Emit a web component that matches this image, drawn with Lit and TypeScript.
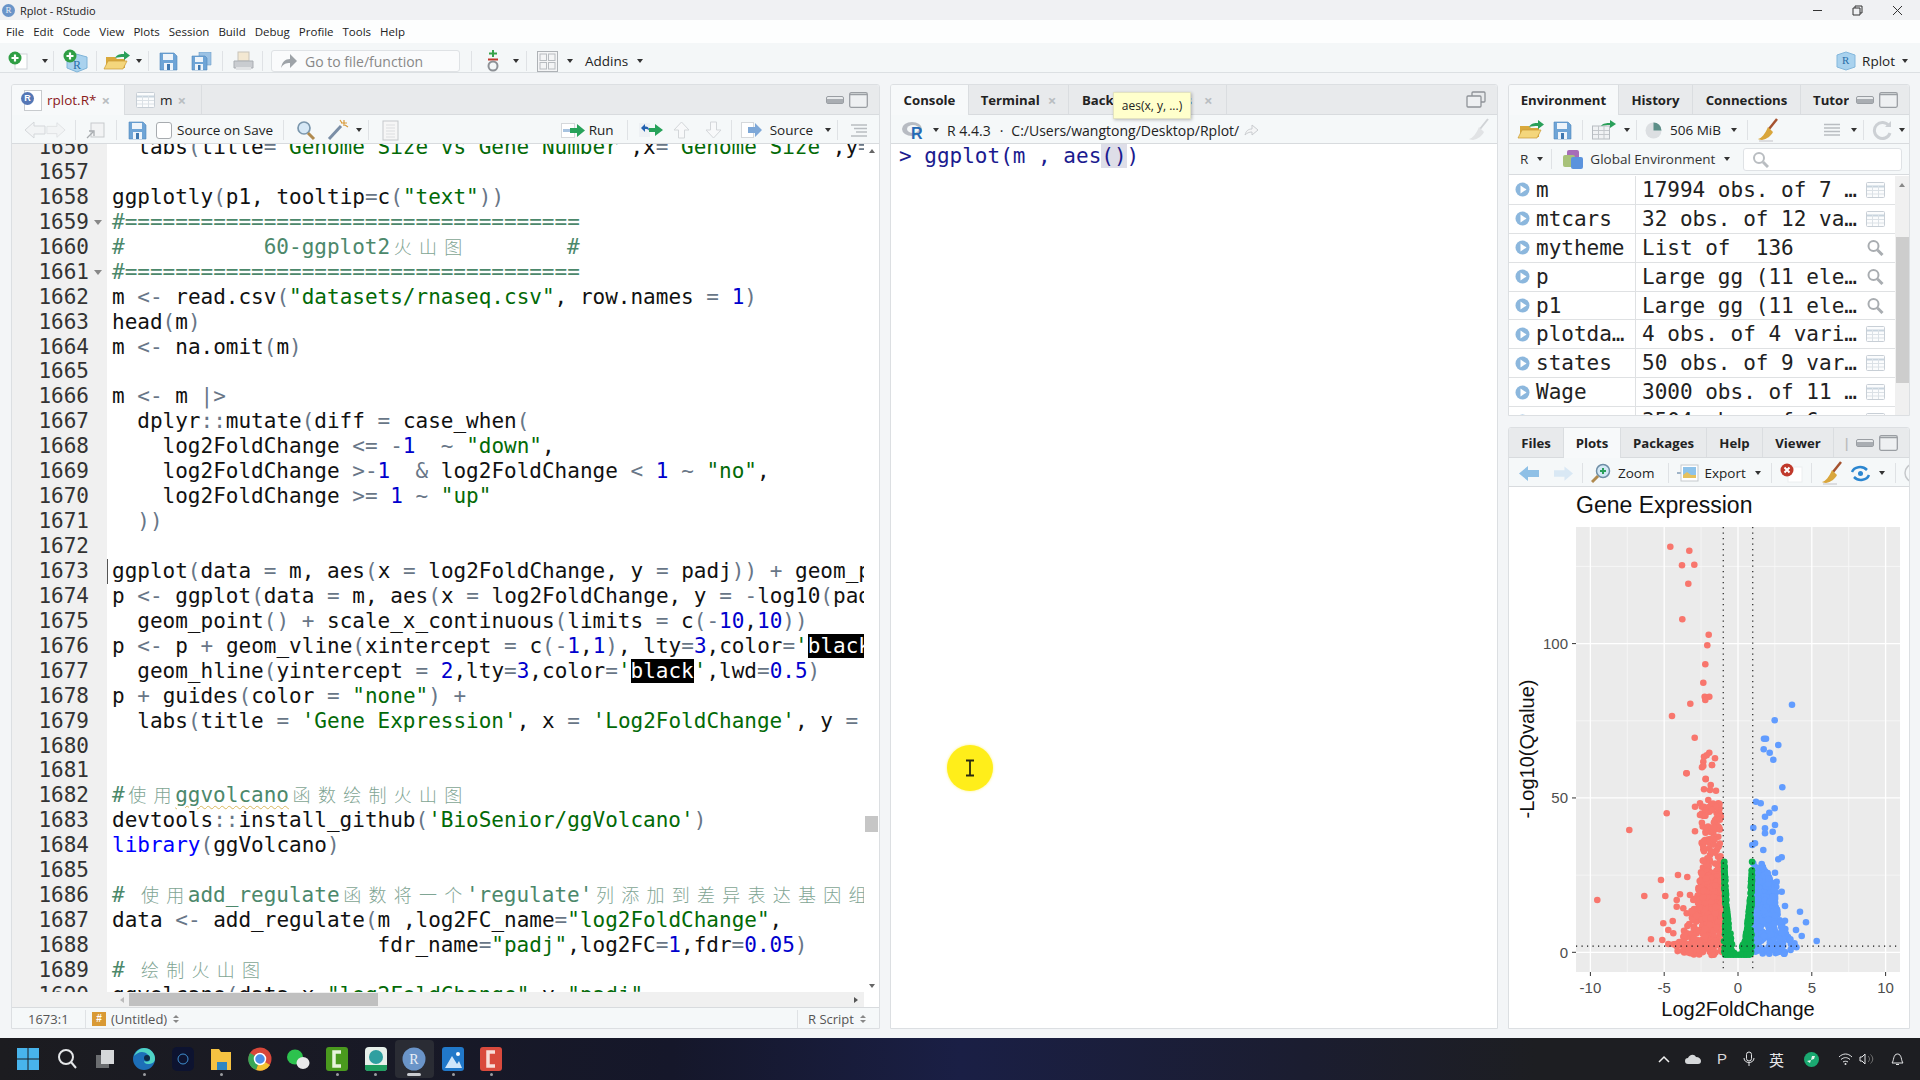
import { LitElement, html, svg, css } from 'lit';
import { customElement } from 'lit/decorators.js';

// ---- code text ----
const CODE: string[] = [
  `  labs(title="Genome Size vs Gene Number",x="Genome Size",y="Gene Number")`,
  ``,
  `ggplotly(p1, tooltip=c("text"))`,
  `#====================================`,
  `#           60-ggplot2火山图        #`,
  `#====================================`,
  `m <- read.csv("datasets/rnaseq.csv", row.names = 1)`,
  `head(m)`,
  `m <- na.omit(m)`,
  ``,
  `m <- m |>`,
  `  dplyr::mutate(diff = case_when(`,
  `    log2FoldChange <= -1  ~ "down",`,
  `    log2FoldChange >-1  & log2FoldChange < 1 ~ "no",`,
  `    log2FoldChange >= 1 ~ "up"`,
  `  ))`,
  ``,
  `ggplot(data = m, aes(x = log2FoldChange, y = padj)) + geom_point()`,
  `p <- ggplot(data = m, aes(x = log2FoldChange, y = -log10(padj), color = diff)) +`,
  `  geom_point() + scale_x_continuous(limits = c(-10,10))`,
  `p <- p + geom_vline(xintercept = c(-1,1), lty=3,color='black',lwd=0.5) +`,
  `  geom_hline(yintercept = 2,lty=3,color='black',lwd=0.5)`,
  `p + guides(color = "none") +`,
  `  labs(title = 'Gene Expression', x = 'Log2FoldChange', y = '-Log10(Qvalue)')`,
  ``,
  ``,
  `#使用ggvolcano函数绘制火山图`,
  `devtools::install_github('BioSenior/ggVolcano')`,
  `library(ggVolcano)`,
  ``,
  `# 使用add_regulate函数将一个'regulate'列添加到差异表达基因组`,
  `data <- add_regulate(m ,log2FC_name="log2FoldChange",`,
  `                     fdr_name="padj",log2FC=1,fdr=0.05)`,
  `# 绘制火山图`,
  `ggvolcano(data,x="log2FoldChange",y="padj",`,
];
const FIRST_LINE = 1656;
const FOLDS = [1659, 1661];

const commentParts = (text: string) =>
  text.split(/([\u4e00-\u9fff]|ggvolcano(?=函))/).filter(Boolean).map(part => {
    if (/[\u4e00-\u9fff]/.test(part)) return html`<span class="cjk">${part}</span>`;
    if (part === 'ggvolcano') return html`<span class="squiggle">${part}</span>`;
    return part;
  });

const TOKENS = /(#.*$)|("[^"]*"|'[^']*')|([A-Za-z_.][\w.]*)|(\d+(?:\.\d+)?)|(<-|\|>|::|<=|>=|[=<>+\-~&()])|(\s+|.)/g;

function highlight(line: string) {
  const out: unknown[] = [];
  for (const m of line.matchAll(TOKENS)) {
    if (m[1]) out.push(html`<span class="c">${commentParts(m[1])}</span>`);
    else if (m[2] === `'black'`) out.push(html`<span class="s">'</span><span class="black">black</span><span class="s">'</span>`);
    else if (m[2]) out.push(html`<span class="s">${m[2]}</span>`);
    else if (m[3]) out.push(m[3] === 'library' ? html`<span class="k">${m[3]}</span>` : m[3]);
    else if (m[4]) out.push(html`<span class="n">${m[4]}</span>`);
    else if (m[5]) out.push(html`<span class="o">${m[5]}</span>`);
    else out.push(m[6]);
  }
  return out;
}

// ---- environment rows ----
const ENV = [
  { name: 'm', value: '17994 obs. of 7 …', kind: 'grid' },
  { name: 'mtcars', value: '32 obs. of 12 va…', kind: 'grid' },
  { name: 'mytheme', value: 'List of  136', kind: 'find' },
  { name: 'p', value: 'Large gg (11 ele…', kind: 'find' },
  { name: 'p1', value: 'Large gg (11 ele…', kind: 'find' },
  { name: 'plotda…', value: '4 obs. of 4 vari…', kind: 'grid' },
  { name: 'states', value: '50 obs. of 9 var…', kind: 'grid' },
  { name: 'Wage', value: '3000 obs. of 11 …', kind: 'grid' },
  { name: 'x', value: '3504 obs. of 6 …', kind: 'grid' },
];

// ---- icons ----
const caret = html`<span class="caret"></span>`;
const sep = html`<span class="sep"></span>`;
const sp = (w: number) => html`<span style="width:${w}px;flex:none"></span>`;

const icNew = html`<svg width="22" height="20" viewBox="0 0 22 20"><rect x="7" y="3" width="12" height="15" fill="#fff" stroke="#cfd4d8"/><circle cx="7" cy="7" r="6.5" fill="#2f9e44"/><path d="M7 3.5v7M3.5 7h7" stroke="#fff" stroke-width="2.2"/></svg>`;
const icProject = html`<svg width="28" height="24" viewBox="0 0 28 24"><path d="M14 5l11 3v11l-10 4-10-4V9z" fill="#a9d2ee" stroke="#7fb4d8"/><text x="11" y="20" font-size="12" font-family="Liberation Serif" fill="#2a6ea8">R</text><circle cx="8" cy="7" r="6.5" fill="#2f9e44"/><path d="M8 3.5v7M4.5 7h7" stroke="#fff" stroke-width="2.2"/></svg>`;
const icFolder = html`<svg width="28" height="20" viewBox="0 0 28 20"><path d="M3 6h9l2 2h8v9H3z" fill="#d9a93c"/><path d="M1 18l4-8h19l-4 8z" fill="#f4d67c" stroke="#c99a35" stroke-width=".7"/><path d="M12 7c2-4 6-4 9-4V0l6 4.500-6 4.500V6c-3 0-6 0-9 1z" fill="#2aa05a"/></svg>`;
const icSave = html`<svg width="19" height="19" viewBox="0 0 19 19"><path d="M1 1h14l3 3v14H1z" fill="#6ea4d6" stroke="#4f88bd" stroke-width=".6"/><rect x="4" y="2" width="10" height="6" fill="#eef4fa"/><rect x="5" y="11" width="9" height="7" fill="#eef4fa"/><rect x="8" y="12" width="3" height="6" fill="#3f78b0"/></svg>`;
const icSaveAll = html`<svg width="21" height="19" viewBox="0 0 21 19"><path d="M8 0h12v13H8z" fill="#9cc2e4" stroke="#6b9dcb" stroke-width=".6"/><path d="M1 4h13l2 2v12H1z" fill="#6ea4d6" stroke="#4f88bd" stroke-width=".6"/><rect x="4" y="5" width="8" height="5" fill="#eef4fa"/><rect x="4" y="12" width="8" height="6" fill="#eef4fa"/><rect x="7" y="13" width="2.500" height="5" fill="#3f78b0"/></svg>`;
const icPrint = html`<svg width="21" height="20" viewBox="0 0 21 20"><rect x="5" y="1" width="11" height="9" fill="#f3e8d2" stroke="#c8c4ba"/><path d="M1 10h19v7H1z" fill="#c9ccd0" stroke="#a9adb2"/><rect x="3" y="16" width="15" height="3" fill="#e1e3e5"/></svg>`;
const icGo = html`<svg width="18" height="16" viewBox="0 0 18 16"><path d="M1 15c1-6 4-9 9-9V1l7 7-7 7v-5c-4 0-7 1-9 5z" fill="#9ea3a8"/></svg>`;
const icVcs = html`<svg width="14" height="22" viewBox="0 0 14 22"><path d="M7 0v7M3 3.500h8" stroke="#38a34a" stroke-width="2"/><path d="M2 9.500h10" stroke="#c0392b" stroke-width="2"/><circle cx="7" cy="16" r="4.500" fill="none" stroke="#8d9196" stroke-width="2"/></svg>`;
const icPanes = html`<svg width="21" height="21" viewBox="0 0 21 21"><rect x=".5" y=".5" width="20" height="20" fill="#f4f5f6" stroke="#aeb2b6"/><rect x="3" y="3" width="6.500" height="6.500" fill="none" stroke="#b8bcc0"/><rect x="11.500" y="3" width="6.500" height="6.500" fill="none" stroke="#b8bcc0"/><rect x="3" y="11.500" width="6.500" height="6.500" fill="none" stroke="#b8bcc0"/><rect x="11.500" y="11.500" width="6.500" height="6.500" fill="none" stroke="#b8bcc0"/></svg>`;
const icCube = html`<svg width="21" height="20" viewBox="0 0 21 20"><path d="M2 4l9-3 9 3v12l-9 3-9-3z" fill="#a9d2ee" stroke="#83b7dc"/><text x="7" y="13" font-size="11" font-family="Liberation Serif" fill="#2a6ea8">R</text></svg>`;
const icBack = html`<svg width="22" height="18" viewBox="0 0 22 18"><path d="M1 9l9-8v4h11v8H10v4z" fill="#f2f4f5" stroke="#d4d7da"/></svg>`;
const icFwd = html`<svg width="20" height="18" viewBox="0 0 22 18"><path d="M21 9l-9-8v4H1v8h11v4z" fill="#f2f4f5" stroke="#dfe1e3"/></svg>`;
const icShow = html`<svg width="20" height="17" viewBox="0 0 20 17"><rect x="6" y="1" width="13" height="14" fill="#f2f3f4" stroke="#c7cacd"/><path d="M2 16l6-6M4 9h5v5" fill="none" stroke="#a8acb0" stroke-width="1.300"/></svg>`;
const icFind = html`<svg width="20" height="21" viewBox="0 0 20 21"><circle cx="8" cy="8" r="6" fill="#d6e8f6" stroke="#7b97ad" stroke-width="1.700"/><path d="M12 13l6 6" stroke="#b08a4e" stroke-width="3"/></svg>`;
const icWand = html`<svg width="23" height="22" viewBox="0 0 23 22"><path d="M2 20L14 7" stroke="#7a8ea6" stroke-width="3"/><path d="M17 1v6M14 4h6M21 8l-3-2M13 1l2 3" stroke="#d99b3c" stroke-width="1.200"/></svg>`;
const icNotes = html`<svg width="18" height="21" viewBox="0 0 18 21"><rect x="2" y="1" width="15" height="19" fill="#f6f6f6" stroke="#c5c8cb"/><path d="M5 5h9M5 8h9M5 11h9M5 14h9M5 17h9" stroke="#dcdee0"/></svg>`;
const icRun = html`<svg width="25" height="15" viewBox="0 0 25 15"><rect x=".5" y=".5" width="13" height="14" fill="#fff" stroke="#d5d8db"/><path d="M2 6h9v3H2z" fill="#a7c3e0"/><path d="M9 5h7V1l8 6.500-8 6.500v-4H9z" fill="#27a25a"/></svg>`;
const icRerun = html`<svg width="24" height="14" viewBox="0 0 24 14"><rect width="11" height="14" fill="#eef1f4"/><path d="M2 5l4-4v2.500c3 0 4 1 4 4-1-1.500-2-1.500-4-1.500V9z" fill="#2361b0"/><path d="M10 5h6V1l8 6-8 6V9h-6z" fill="#27a25a"/></svg>`;
const icUp = html`<svg width="17" height="18" viewBox="0 0 17 18"><path d="M8.500 1L1 9h4.500v8h6V9H16z" fill="#f8f9fa" stroke="#d3d6d9"/></svg>`;
const icDown = html`<svg width="17" height="18" viewBox="0 0 17 18"><path d="M8.500 17L1 9h4.500V1h6v8H16z" fill="#f8f9fa" stroke="#d3d6d9"/></svg>`;
const icSource = html`<svg width="22" height="16" viewBox="0 0 22 16"><rect x=".5" y=".5" width="12" height="15" fill="#fff" stroke="#d5d8db"/><path d="M7 5h7V1l7 7-7 7v-4H7z" fill="#7ea8d8"/></svg>`;
const icOutline = html`<svg width="16" height="13" viewBox="0 0 16 13"><path d="M0 1h16M3 4.500h13M5 8h11M0 12h16" stroke="#b9bdc1" stroke-width="1.300"/></svg>`;
const icMin = html`<svg width="18" height="8" viewBox="0 0 18 8"><rect x=".5" y=".5" width="17" height="7" rx="1.500" fill="#e8eaec" stroke="#9a9ea3"/><rect x="1" y="3" width="16" height="4" fill="#a9adb2"/></svg>`;
const icMax = html`<svg width="19" height="16" viewBox="0 0 19 16"><rect x=".7" y=".7" width="17.600" height="14.600" rx="1.500" fill="#eef0f2" stroke="#9a9ea3" stroke-width="1.300"/><path d="M1 2.500h17" stroke="#9a9ea3" stroke-width="1.600"/></svg>`;
const icRestore = html`<svg width="20" height="17" viewBox="0 0 20 17"><rect x="6" y="1" width="13" height="10" rx="1" fill="none" stroke="#8f9398" stroke-width="1.300"/><rect x="1" y="5" width="14" height="11" rx="1" fill="#eef0f2" stroke="#8f9398" stroke-width="1.300"/></svg>`;
const icRLogo = html`<svg width="24" height="18" viewBox="0 0 24 18"><ellipse cx="10" cy="8" rx="10" ry="7" fill="#b7bbc2"/><ellipse cx="11" cy="8" rx="6" ry="4" fill="#f4f7f8"/><text x="9" y="18" font-size="16" font-weight="700" font-family="Liberation Sans" fill="#2569b5">R</text></svg>`;
const icShare = html`<svg width="15" height="12" viewBox="0 0 15 12"><path d="M1 11c1-4 3-6 7-6V1l6 5-6 5V8c-3 0-5 1-7 3z" fill="#f4f5f6" stroke="#c8cbce"/></svg>`;
const icBroom = html`<svg width="22" height="24" viewBox="0 0 22 24"><path d="M20 1L12 11" stroke="#a5522f" stroke-width="2.500"/><path d="M11 9l5 5c-2 4-6 7-11 8-2 0-4-1-4-1 4-1 7-5 10-12z" fill="#d9a63c"/><path d="M2 23h14" stroke="#d3d5d7" stroke-width="1.500"/></svg>`;
const icBroomOff = html`<svg width="26" height="24" viewBox="0 0 22 24"><path d="M20 1L12 11" stroke="#d0d3d6" stroke-width="2"/><path d="M11 9l5 5c-2 4-6 7-11 8-2 0-4-1-4-1 4-1 7-5 10-12z" fill="#e1e3e5"/></svg>`;
const icImport = html`<svg width="25" height="20" viewBox="0 0 25 20"><rect x=".5" y="6" width="17" height="13" fill="#f0f2f4" stroke="#b7bcc1"/><path d="M1 10.500h16M1 14.500h16M6.500 6v13M12 6v13" stroke="#c4c8cc"/><path d="M9 6c2-3 6-3 9-3V0l6 4-6 4V5c-3 0-6 0-9 1z" fill="#2aa05a"/></svg>`;
const icPie = html`<svg width="17" height="17" viewBox="0 0 17 17"><circle cx="8.500" cy="8.500" r="8" fill="#dcdfe2"/><path d="M8.500 8.500V.5a8 8 0 0 1 8 8z" fill="#5c8f88"/></svg>`;
const icList = html`<svg width="16" height="14" viewBox="0 0 16 14"><path d="M0 1.500h16M0 5h16M0 8.500h16M0 12h16" stroke="#b9bdc1" stroke-width="1.300"/></svg>`;
const icRefresh = html`<svg width="21" height="21" viewBox="0 0 21 21"><path d="M17 6a8 8 0 1 0 1 7" fill="none" stroke="#ccd0d4" stroke-width="3"/><path d="M13 7h6V1z" fill="#ccd0d4"/></svg>`;
const icLayers = html`<svg width="20" height="19" viewBox="0 0 20 19"><rect x="4" y="0" width="12" height="12" rx="2" fill="#a76cb8"/><rect x="0" y="5" width="12" height="12" rx="2" fill="#a8c27a"/><rect x="8" y="7" width="12" height="12" rx="2" fill="#5b93dd"/></svg>`;
const icSearchOff = html`<svg width="17" height="17" viewBox="0 0 17 17"><circle cx="7" cy="7" r="5" fill="none" stroke="#b9bdc1" stroke-width="2"/><path d="M11 11l5 5" stroke="#b9bdc1" stroke-width="3"/></svg>`;
const icMag = html`<svg width="18" height="17" viewBox="0 0 17 17"><circle cx="7" cy="7" r="5" fill="none" stroke="#a9adb1" stroke-width="2"/><path d="M11 11l5 5" stroke="#a9adb1" stroke-width="3"/></svg>`;
const icTable = html`<svg width="19" height="16" viewBox="0 0 19 16"><rect x=".5" y=".5" width="18" height="15" rx="1" fill="#fbfcfd" stroke="#c8cfd6"/><path d="M1 4.500h17" stroke="#c8d4de" stroke-width="2"/><path d="M1 8.500h17M1 12h17M6.500 4v11M12.500 4v11" stroke="#dbe1e6"/></svg>`;
const icExpand = html`<svg width="15" height="15" viewBox="0 0 15 15"><circle cx="7.500" cy="7.500" r="7" fill="#8cb7dd"/><path d="M5.500 3.500v8l6-4z" fill="#fff"/></svg>`;
const icPlotBack = html`<svg width="20" height="15" viewBox="0 0 20 15"><path d="M0 7.500L9 0v4h11v7H9v4z" fill="#8fc0e6"/></svg>`;
const icPlotFwd = html`<svg width="19" height="15" viewBox="0 0 20 15"><path d="M20 7.500L11 0v4H0v7h11v4z" fill="#d9e8f4"/></svg>`;
const icZoom = html`<svg width="20" height="21" viewBox="0 0 20 21"><circle cx="12" cy="8" r="6.500" fill="#d3e8f5" stroke="#6f8ea6" stroke-width="1.500"/><path d="M12 5v6M9 8h6" stroke="#2aa05a" stroke-width="2"/><path d="M7 13l-6 6" stroke="#b08a4e" stroke-width="3"/></svg>`;
const icExport = html`<svg width="22" height="18" viewBox="0 0 22 18"><path d="M0 9h6" stroke="#9fb4c8" stroke-width="2"/><rect x="4" y="1" width="17" height="16" fill="#fff" stroke="#c5c9cd"/><rect x="6" y="3" width="13" height="8" fill="#8ec3ea"/><path d="M6 11l4-3 4 3h5v3H6z" fill="#e6c15d"/></svg>`;
const icRemove = html`<svg width="23" height="20" viewBox="0 0 23 20"><rect x="8" y="4" width="14" height="15" fill="#fff" stroke="#eceef0"/><circle cx="7" cy="7" r="6.500" fill="#c0392b"/><path d="M4.500 4.500l5 5M9.500 4.500l-5 5" stroke="#fff" stroke-width="2"/></svg>`;
const icSync = html`<svg width="21" height="17" viewBox="0 0 21 17"><path d="M2 7c2-5 10-7 15-2M19 10c-2 5-10 7-15 2" fill="none" stroke="#2c86d0" stroke-width="2.500"/><circle cx="10.500" cy="8.500" r="2.500" fill="#2c86d0"/></svg>`;

// ---- volcano plot, points are given in a 3x grid over (1500,500) ----
const PX = (z: number) => 1500 + z / 3;
const PY = (z: number) => 500 + z / 3;
const X = (v: number) => 1738 + v * 14.76;
const Y = (v: number) => 952.3 - v * 3.087;

const rnd = (() => {
  let a = 20240611;
  return () => {
    a = (a + 0x6d2b79f5) | 0;
    let t = Math.imul(a ^ (a >>> 15), 1 | a);
    t = (t + Math.imul(t ^ (t >>> 7), 61 | t)) ^ t;
    return ((t ^ (t >>> 14)) >>> 0) / 4294967296;
  };
})();

const lerp = (table: number[][], at: number) => {
  for (let i = 1; i < table.length; i++) {
    if (at <= table[i][0]) {
      const [x0, y0] = table[i - 1];
      const [x1, y1] = table[i];
      return y0 + ((at - x0) / (x1 - x0)) * (y1 - y0);
    }
  }
  return table[table.length - 1][1];
};

const OFF = 780; // second crop sits 780 grid units below the first
const RED: number[][] = [
  [511,140],[568,152],[546,196],[583,194],[565,251],[547,358],[626,404],[622,436],[616,493],[610,548],[614,590],[628,590],[616,600],[571,611],[516,648],[584,713],[628,758],[620,766],[612,770],[645,775],[610,785],[636,795],[606,802],[560,820],[617,836],
  ...[[610,18],[636,15],[559,40],[617,58],[632,75],[612,88],[630,90],[648,92],[625,120],[655,130],[600,130],[585,140],[605,140],[650,160],[500,160],[600,165],[388,210],[585,214],[650,180],[655,200],[620,210],[640,220],[655,230],[620,240],[640,250],[610,268],[650,270],[630,285],[660,295],[630,305],[665,310],[534,345],[562,351],[483,360],[603,337],[292,420],[433,408],[496,408],[540,403],[530,420],[570,405],[580,420],[530,440],[550,445],[560,460],[575,460],[490,490],[518,483],[505,510],[520,520],[552,512],[550,530],[453,538],[487,540],[505,552]].map(([x, y]) => [x, y + OFF]),
];
const BLUE: number[][] = [
  [876,614],[824,661],[792,716],[798,716],[835,735],[791,748],[809,758],[820,779],
  ...[[847,82],[768,125],[782,130],[824,145],[808,158],[795,170],[760,203],[795,205],[825,195],[818,215],[795,220],[840,237],[765,250],[757,255],[790,270],[845,292],[835,298],[760,310],[785,312],[825,338],[800,340],[830,365],[845,395],[815,410],[855,438],[900,455],[918,487],[840,487],[855,482],[888,510],[905,528],[950,543]].map(([x, y]) => [x, y + OFF]),
];
const GREEN: number[][] = [];

const RED_EDGE = [[340,600],[400,585],[440,578],[470,565],[500,550],[530,530],[560,505],[585,525]];
const BLUE_EDGE = [[320,790],[380,830],[420,830],[470,835],[500,855],[530,868],[560,900],[585,855]];
const INNER_L = [[290,674],[360,676],[440,680],[500,687],[540,697],[580,706]];
const OUTER_L = [[290,672],[360,672],[440,676],[480,676],[540,672],[580,672]];
const INNER_R = [[290,756],[370,753],[440,748],[500,741],[540,731],[580,722]];
const OUTER_R = [[290,757],[370,756],[440,755],[480,752],[540,756],[580,758]];

for (let i = 0; i < 85; i++) {
  RED.push([604 + rnd() * 60, 130 + rnd() * 210 + OFF]);
}
for (let i = 0; i < 470; i++) {
  const z = 340 + rnd() * 245;
  const l = lerp(RED_EDGE, z);
  RED.push([l + (668 - l) * Math.pow(rnd(), 0.6), z + OFF]);
}
for (let i = 0; i < 440; i++) {
  const z = 320 + rnd() * 262;
  const r = lerp(BLUE_EDGE, z);
  BLUE.push([762 + (r - 762) * Math.pow(rnd(), 1.4), z + OFF]);
}
for (let i = 0; i < 230; i++) {
  const z = 292 + Math.pow(rnd(), 0.6) * 292;
  const side = rnd() < 0.5;
  const a = lerp(side ? OUTER_L : INNER_R, z);
  const b = lerp(side ? INNER_L : OUTER_R, z);
  GREEN.push([a + (b - a) * rnd(), z + OFF]);
}
for (let x = 676; x <= 754; x += 8) GREEN.push([x, 584 + OFF]);

const dots = (pts: number[][], fill: string) =>
  pts.map(([x, y]) => svg`<circle cx=${PX(x).toFixed(1)} cy=${PY(y).toFixed(1)} r="3.3" fill=${fill}/>`);

const volcano = html`<svg class="plot" viewBox="1509 487 400 541" width="400" height="541">
  <text x="1576" y="513" font-size="23" fill="#111">Gene Expression</text>
  <rect x="1576" y="527" width="324" height="445" fill="#ebebeb"/>
  ${[-7.5, -2.5, 2.5, 7.5].map(v => svg`<line x1=${X(v)} x2=${X(v)} y1="527" y2="972" stroke="#f7f7f7" stroke-width=".8"/>`)}
  ${[25, 75, 125].map(v => svg`<line x1="1576" x2="1900" y1=${Y(v)} y2=${Y(v)} stroke="#f7f7f7" stroke-width=".8"/>`)}
  ${[-10, -5, 0, 5, 10].map(v => svg`<line x1=${X(v)} x2=${X(v)} y1="527" y2="972" stroke="#fff" stroke-width="1.3"/>
    <line x1=${X(v)} x2=${X(v)} y1="972" y2="976" stroke="#333"/>
    <text x=${X(v)} y="993" font-size="15" fill="#4d4d4d" text-anchor="middle">${v}</text>`)}
  ${[0, 50, 100].map(v => svg`<line x1="1576" x2="1900" y1=${Y(v)} y2=${Y(v)} stroke="#fff" stroke-width="1.3"/>
    <line x1="1572" x2="1576" y1=${Y(v)} y2=${Y(v)} stroke="#333"/>
    <text x="1568" y=${Y(v) + 5.5} font-size="15" fill="#4d4d4d" text-anchor="end">${v}</text>`)}
  ${dots(RED, '#f8766d')}
  ${dots(BLUE, '#619cff')}
  ${dots(GREEN, '#0db14b')}
  <g stroke="#111" stroke-width="1.1" stroke-dasharray="1.2 4.3">
    <line x1=${X(-1)} x2=${X(-1)} y1="527" y2="972"/>
    <line x1=${X(1)} x2=${X(1)} y1="527" y2="972"/>
    <line x1="1576" x2="1900" y1=${Y(2)} y2=${Y(2)}/>
  </g>
  <text x="1738" y="1016" font-size="20" fill="#111" text-anchor="middle">Log2FoldChange</text>
  <text transform="translate(1534 749) rotate(-90)" font-size="20" fill="#111" text-anchor="middle">-Log10(Qvalue)</text>
</svg>`;

// ---- taskbar ----
const TASK = [
  { svg: html`<svg width="22" height="22" viewBox="0 0 22 22"><path d="M0 0h10.500v10.500H0zM11.500 0H22v10.500H11.500zM0 11.500h10.500V22H0zM11.500 11.500H22V22H11.500z" fill="#48b4ec"/></svg>`, dot: false },
  { svg: html`<svg width="22" height="22" viewBox="0 0 22 22"><circle cx="10" cy="9" r="7" fill="none" stroke="#e4e6e8" stroke-width="2"/><path d="M15 14l5 6" stroke="#e4e6e8" stroke-width="2"/></svg>`, dot: false },
  { svg: html`<svg width="22" height="22" viewBox="0 0 22 22"><rect x="2" y="7" width="13" height="13" fill="#6b6d70"/><rect x="7" y="2" width="13" height="14" fill="#d6d8da"/></svg>`, dot: false },
  { svg: html`<svg width="24" height="24" viewBox="0 0 24 24"><circle cx="12" cy="12" r="11" fill="#1d6fb8"/><path d="M12 1a11 11 0 0 1 11 11c0 3-3 5-7 5-3 0-4-2-4-3 2 1 5 1 6-1 0-5-4-8-8-8-3 0-6 2-8 4 2-5 6-8 10-8z" fill="#4fd3c4"/><circle cx="15" cy="11" r="3" fill="#0e2a45"/></svg>`, dot: true },
  { svg: html`<svg width="22" height="24" viewBox="0 0 22 24"><rect width="22" height="24" rx="5" fill="#0d1330"/><circle cx="11" cy="12" r="5" fill="none" stroke="#3f8fd0"/></svg>`, dot: false },
  { svg: html`<svg width="24" height="24" viewBox="0 0 24 24"><path d="M2 2h8l2 3h10v18H2z" fill="#f5c242"/><rect x="8" y="15" width="10" height="8" fill="#2e86c1"/></svg>`, dot: true },
  { svg: html`<svg width="24" height="24" viewBox="0 0 24 24"><circle cx="12" cy="12" r="11.500" fill="#d8473a"/><path d="M12 12L22 18A11.500 11.500 0 0 1 8 23z" fill="#f2c230"/><path d="M12 12L8 23A11.500 11.500 0 0 1 2 6z" fill="#3aa757"/><circle cx="12" cy="12" r="5.500" fill="#4a8ee8" stroke="#fff" stroke-width="1.500"/></svg>`, dot: false },
  { svg: html`<svg width="24" height="22" viewBox="0 0 24 22"><ellipse cx="9" cy="9" rx="8" ry="7.500" fill="#2dc24e"/><ellipse cx="17" cy="15" rx="6.500" ry="6" fill="#e8e9ea"/></svg>`, dot: false },
  { svg: html`<svg width="22" height="24" viewBox="0 0 22 24"><rect width="22" height="24" rx="3" fill="#4a9a1e"/><path d="M15 5H8v14h7" fill="none" stroke="#e8f3dc" stroke-width="3.500"/></svg>`, dot: true },
  { svg: html`<svg width="22" height="24" viewBox="0 0 22 24"><rect width="22" height="24" rx="4" fill="#e7f0ea"/><circle cx="11" cy="10" r="7" fill="#2f9fa0"/><path d="M0 18h22v3a3 3 0 0 1-3 3H3a3 3 0 0 1-3-3z" fill="#1f9e60"/></svg>`, dot: true },
  { svg: html`<svg width="24" height="24" viewBox="0 0 24 24"><circle cx="12" cy="12" r="11.500" fill="#6a94c8"/><text x="12" y="17" font-size="14" text-anchor="middle" font-family="Liberation Serif" fill="#e8eef6">R</text></svg>`, dot: false, active: true },
  { svg: html`<svg width="22" height="24" viewBox="0 0 22 24"><rect width="22" height="24" rx="3" fill="#2178c9"/><path d="M3 21l7-12 5 8 2-3 3 7z" fill="#cfe6fa"/><circle cx="16" cy="7" r="2" fill="#fff"/></svg>`, dot: true },
  { svg: html`<svg width="22" height="24" viewBox="0 0 22 24"><rect width="22" height="24" rx="3" fill="#d94a3d"/><path d="M15 5H8v14h7" fill="none" stroke="#f8ddd9" stroke-width="3.500"/></svg>`, dot: true },
];

@customElement('app-root')
export class AppRoot extends LitElement {
  static styles = css`
    * { box-sizing: border-box; margin: 0; padding: 0; }
    :host {
      display: flex;
      flex-direction: column;
      position: relative;
      width: 1920px;
      height: 1080px;
      overflow: hidden;
      background: #f3f5f7;
      color: #222;
      font-family: "Open Sans", "Noto Sans", sans-serif;
      font-size: 12.5px;
    }
    svg { flex: none; display: block; }

    .title { height: 20px; display: flex; align-items: center; gap: 5px; padding-left: 2px; background: #f0f1f3; font-size: 11px; }
    .badge { width: 13px; height: 13px; border-radius: 50%; background: #6a94c8; color: #e8eef6; font: 9px/13px "Liberation Serif", serif; text-align: center; }
    .win { margin-left: auto; display: flex; gap: 29px; padding-right: 17px; align-items: center; }
    .menu { height: 23px; display: flex; align-items: center; gap: 9px; padding-left: 6px; background: #fdfefe; font-size: 11.5px; }
    .main-bar { height: 30px; display: flex; align-items: center; padding: 7px 0 0 8px; background: #f4f7f8; border-bottom: 1px solid #dce0e3; font-size: 13.5px; }
    .goto { width: 189px; height: 22px; margin: 0 11px 0 8px; padding-left: 8px; display: flex; align-items: center; gap: 7px; background: #fafbfc; border: 1px solid #dfe2e5; border-radius: 3px; color: #888; font-size: 14px; }
    .fill { flex: 1; }
    .caret { flex: none; width: 0; height: 0; border: 3.5px solid transparent; border-top: 4px solid #333; border-bottom: 0; }
    .sep { flex: none; width: 1px; height: 20px; background: #dfe2e5; }

    .work { flex: 1; min-height: 0; display: grid; grid-template-columns: 869px 608px 402px; gap: 10px; padding: 11px 10px 9px 11px; }
    .pane { position: relative; min-height: 0; display: flex; flex-direction: column; background: #fff; border: 1px solid #dcdfe2; border-radius: 3px 3px 0 0; overflow: hidden; }
    .col { min-height: 0; display: grid; grid-template-rows: 332px 1fr; gap: 11px; }
    .tabs { flex: none; height: 30px; display: flex; align-items: stretch; background: #e8eaec; border-bottom: 1px solid #d8dbde; font-weight: 700; font-size: 13.2px; color: #222; }
    .tab { flex: none; display: flex; align-items: center; justify-content: center; gap: 8px; border-right: 1px solid #dadde0; white-space: nowrap; overflow: hidden; }
    .tab.on { background: #f7f9fa; margin-bottom: -1px; }
    .tab.jobs { justify-content: flex-start; padding-left: 13px; gap: 12px; }
    .x { color: #b9bdc1; font-size: 15px; font-weight: 700; }
    .winbtns { margin-left: auto; display: flex; align-items: center; gap: 5px; padding-right: 11px; }
    .bar { flex: none; height: 29px; padding-top: 2px; display: flex; align-items: center; background: #f5f8f9; border-bottom: 1px solid #d8dbde; font-size: 13.5px; }
    .bar.path { font-size: 14px; }
    .pipe { flex: none; width: 6px; margin-left: 9px; color: #bbb; align-self: center; }

    .srctab { font-weight: 400; font-size: 13.5px; justify-content: flex-start; gap: 5px; }
    .srctab .name { color: #8b1a1a; }
    .page { width: 18px; height: 21px; position: relative; background: #fff; border: 1px solid #c8cbce; }
    .page b { position: absolute; left: -4px; top: 1px; width: 13px; height: 13px; border-radius: 50%; background: #5577b5; color: #fff; font: 700 9px/13px "Liberation Sans", sans-serif; text-align: center; }
    .check { width: 16px; height: 17px; background: #fff; border: 1px solid #a7abaf; border-radius: 3px; }

    .editor { flex: 1; min-height: 0; display: grid; grid-template-columns: 1fr 15px; grid-template-rows: 1fr 15px; }
    .lines { overflow: hidden; font: 21px/24.94px "DejaVu Sans Mono", "Noto Sans CJK SC", monospace; color: #111; }
    .lines-in { margin-top: -9px; }
    .ln { display: flex; height: 24.94px; white-space: pre; }
    .num { flex: none; width: 77px; text-align: right; background: #f0f0f0; color: #333; }
    .fold { flex: none; width: 18px; background: #f0f0f0; display: flex; align-items: center; justify-content: center; }
    .fold i { width: 0; height: 0; border: 4px solid transparent; border-top: 5px solid #888; border-bottom: 0; }
    .txt { padding-left: 5px; }
    .cur { border-left: 1px solid #555; padding-left: 4px; }
    .c { color: #4c886b; }
    .s { color: #036a07; }
    .n { color: #0000cd; }
    .o { color: #687687; }
    .k { color: #0000ff; }
    .black { background: #000; color: #fff; }
    .cjk { display: inline-block; width: 25.28px; text-align: center; font-size: 18px; line-height: 20px; font-weight: 300; color: #7fa594; }
    .squiggle { text-decoration: underline wavy #d8b75c 1px; text-underline-offset: 3px; }
    .vbar { background: #fff; display: flex; flex-direction: column; align-items: center; }
    .vbar .up, .vbar .dn { flex: none; width: 0; height: 0; border: 3.5px solid transparent; }
    .vbar .up { border-bottom: 4px solid #666; border-top: 0; margin: 5px 0 0; }
    .vbar .dn { border-top: 4px solid #666; border-bottom: 0; margin: auto 0 4px; }
    .vthumb { width: 13px; height: 16px; margin-top: 663px; background: #c6c6c6; }
    .hbar { background: #f0f0f0; display: flex; align-items: center; }
    .hbar .lf { margin-left: 108px; width: 0; height: 0; border: 3.500px solid transparent; border-right: 4px solid #bbb; border-left: 0; }
    .hthumb { width: 249px; height: 13px; margin-left: 5px; background: #c0c0c0; }
    .hbar .rt { margin: 0 6px 0 auto; width: 0; height: 0; border: 3.5px solid transparent; border-left: 4px solid #555; border-right: 0; }
    .corner { background: #fff; }
    .status { flex: none; height: 21px; padding-top: 2px; display: flex; align-items: center; background: #f5f8f9; border-top: 1px solid #d8dbde; color: #555; font-size: 13px; }
    .status .pos { width: 74px; padding-left: 16px; border-right: 1px solid #dfe2e5; height: 100%; display: flex; align-items: center; }
    .hash { width: 14px; height: 14px; margin: 0 5px 0 6px; background: #d99a35; color: #fff; font: 700 10px/14px "Liberation Sans", sans-serif; text-align: center; }
    .updown { display: flex; flex-direction: column; gap: 2px; margin-left: 6px; }
    .updown i { width: 0; height: 0; border: 3px solid transparent; }
    .updown i:first-child { border-bottom: 3.5px solid #888; border-top: 0; }
    .updown i:last-child { border-top: 3.5px solid #888; border-bottom: 0; }
    .status .kind { margin-left: auto; width: 82px; height: 100%; padding-left: 10px; border-left: 1px solid #dfe2e5; display: flex; align-items: center; }

    .console { flex: 1; padding: 0 0 0 8px; font: 21px/25px "DejaVu Sans Mono", monospace; color: #1b1b8f; white-space: pre; }
    .match { background: #dedee8; }
    .tip { position: absolute; left: 222px; top: 7px; width: 78px; height: 27px; background: #ffffcc; border: 1px solid #e3e3c0; box-shadow: 1px 1px 3px rgba(0,0,0,.25); font-size: 12px; font-weight: 400; line-height: 25px; text-align: center; color: #222; white-space: nowrap; }

    .envbar { flex: none; height: 31px; display: flex; align-items: center; background: #f5f8f9; border-bottom: 1px solid #d8dbde; font-size: 13.5px; color: #333; }
    .envsearch { width: 159px; height: 23px; margin-left: 13px; padding-left: 8px; display: flex; align-items: center; background: #fff; border: 1px solid #dfe2e5; border-radius: 3px; }
    .envbody { flex: 1; min-height: 0; display: grid; grid-template-columns: 1fr 14px; padding-top: 1px; overflow: hidden; }
    .rows { font: 21px/28px "DejaVu Sans Mono", monospace; color: #222; }
    .row { height: 28.9px; display: grid; grid-template-columns: 127px 1fr 32px; border-bottom: 1px solid #dfe1e3; white-space: pre; }
    .row > div { display: flex; align-items: center; overflow: hidden; }
    .row .nm { padding-left: 6px; gap: 6px; border-right: 1px solid #dfe1e3; }
    .row .val { padding-left: 6px; }
    .row .act { padding-left: 3px; }
    .envscroll { background: #f0f0f0; display: flex; flex-direction: column; align-items: center; }
    .envscroll .up { flex: none; width: 0; height: 0; border: 3.5px solid transparent; border-bottom: 4px solid #888; border-top: 0; margin: 7px 0 0; }
    .envscroll .thumb { width: 13px; height: 146px; margin-top: 50px; background: #cdcdcd; }
    .envscroll .dn { flex: none; width: 0; height: 0; border: 3.5px solid transparent; border-top: 4px solid #888; border-bottom: 0; margin: auto 0 7px; }
    .plot text { font-family: "Liberation Sans", Arial, sans-serif; }

    .taskbar { flex: none; height: 42px; display: flex; align-items: center; padding-left: 9px; background: linear-gradient(90deg, #1c1c20 0, #15172a 35%, #1a1f45 50%, #1b1d30 68%, #1d1e22 80%); }
    .task { position: relative; width: 38.6px; height: 38px; display: flex; align-items: center; justify-content: center; }
    .task.active { background: #2a2c34; border-radius: 4px; }
    .task .dot { position: absolute; left: 18px; bottom: 2px; width: 3px; height: 3px; border-radius: 50%; background: #9a9ca0; }
    .task.active .dot { left: 12px; width: 14px; border-radius: 2px; background: #c9cbd0; }
    .tray { margin-left: auto; display: flex; align-items: center; color: #e6e7e9; font-size: 15px; font-family: "Noto Sans CJK SC", sans-serif; }

    .spot { position: absolute; left: 947px; top: 745px; width: 46px; height: 46px; border-radius: 50%; background: #ffee1a; box-shadow: 0 0 3px #fff27a; display: flex; align-items: center; justify-content: center; }
  `;

  render() {
    return html`
      <div class="title">
        <span class="badge">R</span><span>Rplot - RStudio</span>
        <div class="win">
          <svg width="11" height="11" viewBox="0 0 11 11"><path d="M1 5.500h9" stroke="#333"/></svg>
          <svg width="11" height="11" viewBox="0 0 11 11"><path d="M3 3V1h7v7H8M1 3h7v7H1z" fill="none" stroke="#333"/></svg>
          <svg width="11" height="11" viewBox="0 0 11 11"><path d="M1 1l9 9M10 1l-9 9" stroke="#333"/></svg>
        </div>
      </div>
      <div class="menu">
        ${['File', 'Edit', 'Code', 'View', 'Plots', 'Session', 'Build', 'Debug', 'Profile', 'Tools', 'Help'].map(m => html`<span>${m}</span>`)}
      </div>
      <div class="main-bar">
        ${icNew}${sp(12)}${caret}${sp(5)}${sep}${sp(8)}${icProject}${sp(6)}${sep}${sp(6)}${icFolder}${sp(5)}${caret}${sp(6)}${sep}${sp(10)}${icSave}${sp(13)}${icSaveAll}${sp(10)}${sep}${sp(10)}${icPrint}${sp(8)}${sep}
        <div class="goto">${icGo}<span>Go to file/function</span></div>
        ${sep}${sp(14)}${icVcs}${sp(13)}${caret}${sp(7)}${sep}${sp(10)}${icPanes}${sp(9)}${caret}${sp(12)}<span>Addins</span>${sp(9)}${caret}
        <span class="fill"></span>
        ${icCube}${sp(6)}<span>Rplot</span>${sp(7)}${caret}${sp(12)}
      </div>

      <div class="work">
        <section class="pane">
          <div class="tabs">
            <div class="tab on srctab" style="width:113px;padding-left:12px">
              <span class="page"><b>R</b></span><span class="name">rplot.R*</span><span class="x">×</span>
            </div>
            <div class="tab srctab" style="width:77px;padding-left:11px">
              ${icTable}<span>m</span><span class="x">×</span>
            </div>
            <div class="winbtns">${icMin}${icMax}</div>
          </div>
          <div class="bar">
            ${sp(12)}${icBack}${icFwd}${sp(9)}${sep}${sp(9)}${icShow}${sp(11)}${sep}${sp(11)}${icSave}${sp(9)}<span class="check"></span>${sp(5)}<span>Source on Save</span>${sp(10)}${sep}${sp(12)}${icFind}${sp(11)}${icWand}${sp(6)}${caret}${sp(6)}${sep}${sp(12)}${icNotes}
            <span class="fill"></span>
            ${icRun}${sp(3)}<span>Run</span>${sp(13)}${sep}${sp(11)}${icRerun}${sp(10)}${icUp}${sp(15)}${icDown}${sp(9)}${sep}${sp(9)}${icSource}${sp(7)}<span>Source</span>${sp(12)}${caret}${sp(6)}${sep}${sp(13)}${icOutline}${sp(12)}
          </div>
          <div class="editor">
            <div class="lines"><div class="lines-in">
              ${CODE.map((line, i) => {
                const no = FIRST_LINE + i;
                return html`<div class="ln">
                  <span class="num">${no}</span>
                  <span class="fold">${FOLDS.includes(no) ? html`<i></i>` : ''}</span>
                  <span class="txt ${no === 1673 ? 'cur' : ''}">${highlight(line)}</span>
                </div>`;
              })}
            </div></div>
            <div class="vbar"><i class="up"></i><div class="vthumb"></div><i class="dn"></i></div>
            <div class="hbar"><i class="lf"></i><div class="hthumb"></div><i class="rt"></i></div>
            <div class="corner"></div>
          </div>
          <div class="status">
            <span class="pos">1673:1</span>
            <span class="hash">#</span><span>(Untitled)</span><span class="updown"><i></i><i></i></span>
            <span class="kind">R Script<span class="updown"><i></i><i></i></span></span>
          </div>
        </section>

        <section class="pane">
          <div class="tabs">
            <div class="tab on" style="width:78px">Console</div>
            <div class="tab" style="width:100px">Terminal<span class="x">×</span></div>
            <div class="tab jobs" style="width:158px">Background Jobs<span class="x">×</span></div>
            <div class="winbtns">${icRestore}</div>
          </div>
          <div class="bar path">
            ${sp(11)}${icRLogo}${sp(7)}${caret}${sp(8)}<span>R 4.4.3</span>${sp(9)}<span>·</span>${sp(8)}<span>C:/Users/wangtong/Desktop/Rplot/</span>${sp(5)}${icShare}
            <span class="fill"></span>
            ${icBroomOff}${sp(5)}
          </div>
          <div class="console">&gt; ggplot(m , aes<span class="match">()</span>)</div>
          <div class="tip">aes(x, y, ...)</div>
        </section>

        <div class="col">
          <section class="pane">
            <div class="tabs">
              <div class="tab on" style="width:110px">Environment</div>
              <div class="tab" style="width:74px">History</div>
              <div class="tab" style="width:108px">Connections</div>
              <div class="tab" style="width:48px;justify-content:flex-start;padding-left:12px;border-right:0">Tutorial</div>
              <div class="winbtns">${icMin}${icMax}</div>
            </div>
            <div class="bar">
              ${sp(8)}${icFolder}${sp(8)}${icSave}${sp(10)}${sep}${sp(9)}${icImport}${sp(7)}${caret}${sp(6)}${sep}${sp(8)}${icPie}${sp(8)}<span>506 MiB</span>${sp(10)}${caret}${sp(10)}${sep}${sp(9)}${icBroom}
              <span class="fill"></span>
              ${icList}${sp(11)}${caret}${sp(6)}${sep}${sp(8)}${icRefresh}${sp(6)}${caret}${sp(4)}
            </div>
            <div class="envbar">
              ${sp(11)}<span>R</span>${sp(9)}${caret}${sp(8)}${sep}${sp(11)}${icLayers}${sp(7)}<span>Global Environment</span>${sp(9)}${caret}
              <div class="envsearch">${icSearchOff}</div>
            </div>
            <div class="envbody">
              <div class="rows">
                ${ENV.map(row => html`<div class="row">
                  <div class="nm">${icExpand}<span>${row.name}</span></div>
                  <div class="val">${row.value}</div>
                  <div class="act">${row.kind === 'grid' ? icTable : icMag}</div>
                </div>`)}
              </div>
              <div class="envscroll"><i class="up"></i><div class="thumb"></div><i class="dn"></i></div>
            </div>
          </section>

          <section class="pane">
            <div class="tabs">
              <div class="tab" style="width:55px">Files</div>
              <div class="tab on" style="width:57px">Plots</div>
              <div class="tab" style="width:86px">Packages</div>
              <div class="tab" style="width:56px">Help</div>
              <div class="tab" style="width:71px">Viewer</div>
              <span class="pipe">|</span>
              <div class="winbtns">${icMin}${icMax}</div>
            </div>
            <div class="bar">
              ${sp(10)}${icPlotBack}${sp(15)}${icPlotFwd}${sp(9)}${sep}${sp(8)}${icZoom}${sp(7)}<span>Zoom</span>${sp(14)}${sep}${sp(8)}${icExport}${sp(5)}<span>Export</span>${sp(9)}${caret}${sp(10)}${sep}${sp(8)}${icRemove}${sp(8)}${sep}${sp(9)}${icBroom}${sp(7)}${icSync}${sp(8)}${caret}${sp(10)}${sep}${sp(8)}
              <svg width="10" height="20" viewBox="0 0 10 20"><circle cx="10" cy="10" r="9" fill="none" stroke="#c5c8cb" stroke-width="1.500"/></svg>
            </div>
            ${volcano}
          </section>
        </div>
      </div>

      <div class="taskbar">
        ${TASK.map(t => html`<div class="task ${t.active ? 'active' : ''}">${t.svg}${t.dot || t.active ? html`<span class="dot"></span>` : ''}</div>`)}
        <div class="tray">
          <svg width="14" height="9" viewBox="0 0 14 9"><path d="M2 7l5-5 5 5" fill="none" stroke="#eee" stroke-width="1.500"/></svg>
          ${sp(14)}
          <svg width="16" height="10" viewBox="0 0 16 10"><path d="M3 10a3 3 0 0 1 0-6c1-3 6-5 8-1 3 0 5 2 5 4s-1 3-3 3z" fill="#d6d8da"/></svg>
          ${sp(14)}
          <svg width="14" height="16" viewBox="0 0 14 16"><text x="2" y="13" font-size="15" font-family="Liberation Sans" fill="#d8d9db">P</text></svg>
          ${sp(14)}
          <svg width="12" height="16" viewBox="0 0 12 16"><rect x="3.500" y="1" width="5" height="9" rx="2.500" fill="none" stroke="#e6e7e9"/><path d="M1 7c0 6 10 6 10 0M6 12v3" fill="none" stroke="#e6e7e9"/></svg>
          ${sp(14)}<span>英</span>${sp(20)}
          <svg width="15" height="15" viewBox="0 0 15 15"><circle cx="7.500" cy="7.500" r="7.500" fill="#1aa971"/><path d="M3 9l4-1 1-4 3 0-1 3-3 1-1 3z" fill="#e8f6ef"/></svg>
          ${sp(19)}
          <svg width="15" height="12" viewBox="0 0 15 12"><path d="M1 4c4-4 9-4 13 0M3 6.500c3-2.500 6-2.500 9 0M5 9c1.500-1 3.500-1 5 0" fill="none" stroke="#e6e7e9"/><circle cx="7.500" cy="11" r="1" fill="#e6e7e9"/></svg>
          ${sp(6)}
          <svg width="15" height="12" viewBox="0 0 15 12"><path d="M1 4h2l3-3v10L3 8H1z" fill="none" stroke="#e6e7e9"/><path d="M9 3c2 2 2 4 0 6M11.500 1.500c3 3 3 6 0 9" fill="none" stroke="#777"/></svg>
          ${sp(17)}
          <svg width="13" height="14" viewBox="0 0 13 14"><path d="M1 11c2-2 1-9 5.500-9S10 9 12 11zM5 12.500h3" fill="none" stroke="#e6e7e9"/></svg>
          ${sp(16)}
        </div>
      </div>

      <div class="spot">
        <svg width="10" height="18" viewBox="0 0 10 18"><path d="M1 1.500h8M1 16.500h8M5 1.500v15" stroke="#2a2a10" stroke-width="1.800" fill="none"/></svg>
      </div>
    `;
  }
}
